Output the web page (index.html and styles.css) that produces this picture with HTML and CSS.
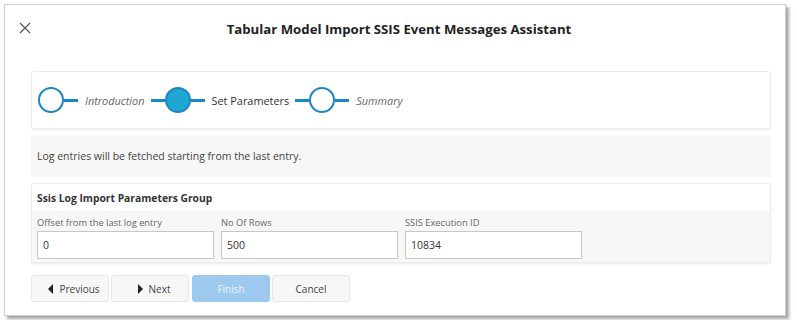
FILE: index.html
```html
<!DOCTYPE html>
<html lang="en">
<head>
    <meta charset="UTF-8">
    <title>Tabular Model Import SSIS Event Messages Assistant</title>
    <link rel="stylesheet" href="styles.css">
</head>
<body>
    <div class="dialog">
        <div class="dialog-header">
            <button class="close-btn" aria-label="Close">
                <svg width="12" height="12" viewBox="0 0 12 12"><path d="M1 1 L11 11 M11 1 L1 11" stroke="#555" stroke-width="1.2" fill="none"/></svg>
            </button>
            <h1>Tabular Model Import SSIS Event Messages Assistant</h1>
        </div>

        <div class="content">
            <div class="card stepper">
                <div class="step">
                    <span class="circle"></span><span class="line"></span>
                    <span class="step-label">Introduction</span>
                </div>
                <div class="step active">
                    <span class="line"></span><span class="circle"></span><span class="line"></span>
                    <span class="step-label">Set Parameters</span>
                </div>
                <div class="step">
                    <span class="line"></span><span class="circle"></span><span class="line"></span>
                    <span class="step-label">Summary</span>
                </div>
            </div>

            <div class="info-box">Log entries will be fetched starting from the last entry.</div>

            <div class="card group">
                <div class="group-title">Ssis Log Import Parameters Group</div>
                <div class="group-body">
                    <div class="field">
                        <label>Offset from the last log entry</label>
                        <input type="text" value="0">
                    </div>
                    <div class="field">
                        <label>No Of Rows</label>
                        <input type="text" value="500">
                    </div>
                    <div class="field">
                        <label>SSIS Execution ID</label>
                        <input type="text" value="10834">
                    </div>
                </div>
            </div>

            <div class="buttons">
                <button class="btn btn-icon"><span class="tri-left"></span>Previous</button>
                <button class="btn btn-icon"><span class="tri-right"></span>Next</button>
                <button class="btn btn-primary" disabled>Finish</button>
                <button class="btn">Cancel</button>
            </div>
        </div>
    </div>
</body>
</html>
```

FILE: styles.css
```css
* {
    margin: 0;
    padding: 0;
    box-sizing: border-box;
    font-family: 'Open Sans', sans-serif;
}

body {
    background: #fff;
    color: #333;
}

.dialog {
    margin: 4px;
    width: 782px;
    height: 312px;
    border: 1px solid #cfcfcf;
    background: #fff;
    box-shadow: 3px 3px 3px #a5a5a5;
}

.dialog-header {
    position: relative;
    height: 47px;
    display: flex;
    align-items: center;
    justify-content: center;
}

.dialog-header h1 {
    font-size: 13.2px;
    font-weight: 700;
    color: #222;
    margin-left: 8px;
}

.close-btn {
    position: absolute;
    left: 13px;
    top: 16px;
    width: 14px;
    height: 14px;
    border: none;
    background: none;
    display: flex;
    align-items: center;
    justify-content: center;
}

.content {
    padding: 19px 14px 0 26px;
}

.card {
    background: #fff;
    border: 1px solid #ececec;
    border-radius: 3px;
    box-shadow: 0 1px 2px rgba(0,0,0,0.08);
}

.stepper {
    height: 58px;
    display: flex;
    align-items: center;
    padding-left: 6px;
}

.step {
    display: flex;
    align-items: center;
}

.circle {
    width: 26px;
    height: 26px;
    border-radius: 50%;
    border: 2px solid #1a86c8;
    background: #fff;
}

.step.active .circle {
    background: #1fa6d1;
}

.line {
    width: 14px;
    height: 3px;
    background: #1a86c8;
}

.step-label {
    font-size: 10.9px;
    font-style: italic;
    color: #666;
    margin: 0 6px 0 7px;
}

.step.active .step-label {
    font-style: normal;
    color: #333;
}

.info-box {
    margin-top: 6px;
    height: 42px;
    background: #f7f7f7;
    border-radius: 3px;
    font-size: 10.5px;
    color: #444;
    display: flex;
    align-items: center;
    padding-left: 6px;
}

.group {
    margin-top: 6px;
    height: 80px;
    overflow: hidden;
}

.group-title {
    height: 27px;
    font-size: 10.3px;
    font-weight: 700;
    color: #333;
    display: flex;
    align-items: center;
    padding-left: 5px;
}

.group-body {
    background: #f7f7f7;
    height: 52px;
    display: flex;
    gap: 7px;
    padding: 4px 5px 0;
}

.field {
    display: flex;
    flex-direction: column;
}

.field label {
    font-size: 9.3px;
    color: #666;
    height: 16px;
    line-height: 16px;
}

.field input {
    width: 177px;
    height: 28px;
    border: 1px solid #c6c6c6;
    background: #fff;
    font-size: 10.5px;
    color: #333;
    padding: 0 5px;
    outline: none;
}

.buttons {
    margin-top: 12px;
    display: flex;
    gap: 2px;
}

.btn {
    width: 78px;
    height: 27px;
    border: 1px solid #e7e7e7;
    border-radius: 3px;
    background: #f7f7f7;
    font-size: 10px;
    color: #444;
    display: flex;
    align-items: center;
    justify-content: center;
}

.btn-icon {
    padding-left: 8px;
}

.btn-primary {
    background: #9dc9ef;
    border-color: #9dc9ef;
    color: #eaf4fc;
    margin-left: 1px;
}

.tri-left, .tri-right {
    width: 0;
    height: 0;
    border-top: 5px solid transparent;
    border-bottom: 5px solid transparent;
    margin-right: 6px;
}

.tri-left {
    border-right: 5px solid #222;
}

.tri-right {
    border-left: 5px solid #222;
}
```
